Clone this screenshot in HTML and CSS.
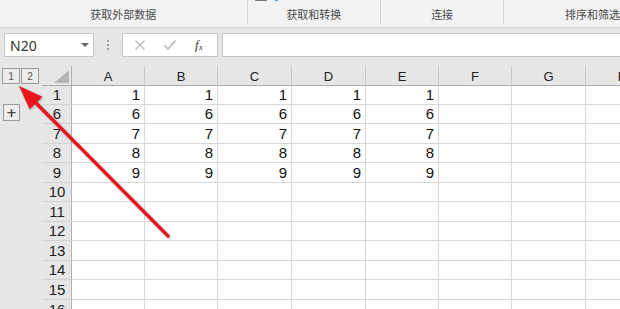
FILE: index.html
```html
<!DOCTYPE html>
<html>
<head>
<meta charset="utf-8">
<link rel="stylesheet" href="styles.css">
</head>
<body>
<div class="app">
  <div class="ribbon">
    <div class="group g1"><span class="glabel">获取外部数据</span></div>
    <div class="group g2"><div class="frag"><i class="fr-dark"></i><i class="fr-blue"></i></div><span class="glabel">获取和转换</span></div>
    <div class="group g3"><span class="glabel">连接</span></div>
    <div class="group g4"><span class="glabel">排序和筛选</span></div>
  </div>
  <div class="fbar">
    <div class="namebox"><span class="nbtext">N20</span><svg class="nbarrow" width="8" height="5" viewBox="0 0 8 5"><polygon points="0,0 8,0 4,4" fill="#666"/></svg></div>
    <div class="vdots"><i></i><i></i><i></i></div>
    <div class="fxbox">
      <svg class="ico" width="12" height="12" viewBox="0 0 12 12"><path d="M1.5 1.5 L10.5 10.5 M10.5 1.5 L1.5 10.5" stroke="#b8b8b8" stroke-width="1.2" fill="none"/></svg>
      <svg class="ico" width="14" height="12" viewBox="0 0 14 12"><path d="M1.5 6.5 L5 10 L12.5 1.5" stroke="#b8b8b8" stroke-width="1.6" fill="none"/></svg>
      <span class="fx">f<sub>x</sub></span>
    </div>
    <div class="finput"></div>
  </div>
  <div class="sheet">
    <div class="gutter">
      <div class="levels"><span class="lvl">1</span><span class="lvl">2</span></div>
      <div class="plus">+</div>
    </div>
    <div class="grid">
      <div class="corner"><svg width="15" height="13" viewBox="0 0 15 13"><polygon points="15,0 15,13 0,13" fill="#b6b6b6"/></svg></div>
      <div class="ch">A</div><div class="ch">B</div><div class="ch">C</div><div class="ch">D</div><div class="ch">E</div><div class="ch">F</div><div class="ch">G</div><div class="ch">H</div>

      <div class="rh">1</div><div class="c">1</div><div class="c">1</div><div class="c">1</div><div class="c">1</div><div class="c">1</div><div class="c"></div><div class="c"></div><div class="c"></div>
      <div class="rh">6</div><div class="c">6</div><div class="c">6</div><div class="c">6</div><div class="c">6</div><div class="c">6</div><div class="c"></div><div class="c"></div><div class="c"></div>
      <div class="rh">7</div><div class="c">7</div><div class="c">7</div><div class="c">7</div><div class="c">7</div><div class="c">7</div><div class="c"></div><div class="c"></div><div class="c"></div>
      <div class="rh">8</div><div class="c">8</div><div class="c">8</div><div class="c">8</div><div class="c">8</div><div class="c">8</div><div class="c"></div><div class="c"></div><div class="c"></div>
      <div class="rh">9</div><div class="c">9</div><div class="c">9</div><div class="c">9</div><div class="c">9</div><div class="c">9</div><div class="c"></div><div class="c"></div><div class="c"></div>
      <div class="rh">10</div><div class="c"></div><div class="c"></div><div class="c"></div><div class="c"></div><div class="c"></div><div class="c"></div><div class="c"></div><div class="c"></div>
      <div class="rh">11</div><div class="c"></div><div class="c"></div><div class="c"></div><div class="c"></div><div class="c"></div><div class="c"></div><div class="c"></div><div class="c"></div>
      <div class="rh">12</div><div class="c"></div><div class="c"></div><div class="c"></div><div class="c"></div><div class="c"></div><div class="c"></div><div class="c"></div><div class="c"></div>
      <div class="rh">13</div><div class="c"></div><div class="c"></div><div class="c"></div><div class="c"></div><div class="c"></div><div class="c"></div><div class="c"></div><div class="c"></div>
      <div class="rh">14</div><div class="c"></div><div class="c"></div><div class="c"></div><div class="c"></div><div class="c"></div><div class="c"></div><div class="c"></div><div class="c"></div>
      <div class="rh">15</div><div class="c"></div><div class="c"></div><div class="c"></div><div class="c"></div><div class="c"></div><div class="c"></div><div class="c"></div><div class="c"></div>
      <div class="rh">16</div><div class="c"></div><div class="c"></div><div class="c"></div><div class="c"></div><div class="c"></div><div class="c"></div><div class="c"></div><div class="c"></div>
    </div>
  </div>
  <svg class="arrow" width="620" height="309" viewBox="0 0 620 309">
    <g class="arrow-g">
      <line x1="168" y1="236" x2="32" y2="99" stroke="#e8161c" stroke-width="3.2" stroke-linecap="round"/>
      <polygon points="19,86 42.4,96.7 29.6,109.3" fill="#e8161c"/>
    </g>
  </svg>
</div>
</body>
</html>
```

FILE: styles.css
```css
* { box-sizing: border-box; }
html, body { margin: 0; padding: 0; }
body {
  width: 620px;
  height: 309px;
  overflow: hidden;
  background: #e6e6e6;
  font-family: "Liberation Sans", Arial, sans-serif;
}
.app { position: relative; width: 620px; height: 309px; overflow: hidden; }

/* Ribbon */
.ribbon {
  height: 28px;
  background: #f3f3f3;
  border-bottom: 1px solid #d6d6d6;
  display: flex;
  align-items: flex-start;
}
.group {
  height: 24px;
  border-right: 1px solid #d8d8d8;
  display: flex;
  flex-direction: column;
  justify-content: flex-end;
  align-items: center;
  padding-bottom: 3px;
  position: relative;
}
.g1 { width: 248px; }
.g2 { width: 134px; }
.g3 { width: 123px; }
.g4 { flex: 1; align-items: flex-start; padding-left: 61px; border-right: none; }
.glabel {
  font-family: "Noto Sans CJK SC", sans-serif;
  font-size: 11px;
  line-height: 14px;
  color: #4a4a4a;
  white-space: nowrap;
}
.frag { position: absolute; top: 0; left: 7px; display: flex; gap: 8px; }
.fr-dark { display: block; width: 12px; height: 1px; background: #777; }
.fr-blue { display: block; width: 3px; height: 1px; background: #5a90d8; }

/* Formula bar */
.fbar {
  height: 38px;
  padding: 5px 0 0 4px;
  display: flex;
  align-items: flex-start;
  background: #e6e6e6;
}
.namebox {
  width: 90px;
  height: 24px;
  background: #fff;
  border: 1px solid #c6c6c6;
  display: flex;
  align-items: center;
  justify-content: space-between;
  padding: 0 4px 0 5px;
}
.nbtext { font-family: "Noto Sans", sans-serif; font-size: 14px; color: #333; }
.nbarrow { margin-top: 1px; }
.vdots {
  width: 28px;
  height: 24px;
  display: flex;
  flex-direction: column;
  align-items: center;
  justify-content: center;
  gap: 2px;
}
.vdots i { display: block; width: 2px; height: 2px; background: #a0a0a0; }
.fxbox {
  width: 96px;
  height: 24px;
  background: #fff;
  border: 1px solid #c6c6c6;
  display: flex;
  align-items: center;
  padding-left: 11px;
  gap: 17px;
}
.fx {
  font-family: "Liberation Serif", serif;
  font-style: italic;
  font-size: 13px;
  color: #333;
  margin-left: 1px;
}
.fx sub { font-size: 9px; vertical-align: -1px; }
.finput {
  flex: 1;
  height: 24px;
  margin-left: 4px;
  background: #fff;
  border: 1px solid #c6c6c6;
  border-right: none;
}

/* Sheet */
.sheet { display: flex; height: 243px; }
.gutter {
  width: 42px;
  flex: none;
  background: #e6e6e6;
  padding: 2px 0 0 2px;
  display: flex;
  flex-direction: column;
  gap: 20px;
}
.levels { display: flex; gap: 1px; }
.lvl {
  width: 18px;
  height: 16px;
  border: 1px solid #9a9a9a;
  background: #ececec;
  font-family: "Liberation Sans", sans-serif;
  font-size: 10px;
  color: #555;
  display: flex;
  align-items: center;
  justify-content: center;
}
.plus {
  width: 17px;
  height: 17px;
  margin-left: 1px;
  border: 1px solid #9a9a9a;
  background: #ececec;
  font-family: "DejaVu Sans", sans-serif;
  font-size: 13px;
  font-weight: bold;
  color: #444;
  display: flex;
  align-items: center;
  justify-content: center;
  line-height: 1;
}
.grid {
  display: grid;
  grid-template-columns: 30px 73px 73px 74px 74px 73px 73px 74px 74px;
  grid-template-rows: 20px 19px 19px 20px 19px 20px 19px 20px 19px 20px 19px 20px 20px;
  flex: none;
  background: #fff;
}
.corner {
  background: #e6e6e6;
  border-right: 1px solid #b0b0b0;
  border-bottom: 1px solid #ababab;
  display: flex;
  align-items: flex-end;
  justify-content: flex-end;
  padding: 0 2px 2px 0;
}
.ch {
  background: #e6e6e6;
  border-right: 1px solid #cacaca;
  border-bottom: 1px solid #ababab;
  font-size: 13px;
  color: #222;
  display: flex;
  align-items: center;
  justify-content: center;
  padding-top: 1px;
}
.rh {
  background: #e6e6e6;
  border-right: 1px solid #b0b0b0;
  border-bottom: 1px solid #d2d2d2;
  font-size: 15px;
  color: #222;
  display: flex;
  align-items: flex-end;
  justify-content: center;
  padding: 0 0 1px 1px;
  line-height: 16px;
}
.c {
  border-right: 1px solid #d8d8d8;
  border-bottom: 1px solid #d8d8d8;
  font-size: 15px;
  line-height: 16px;
  color: #111;
  display: flex;
  align-items: flex-end;
  justify-content: flex-end;
  padding: 0 4px 1px 0;
}

/* Annotation arrow */
.arrow { position: absolute; left: 0; top: 0; pointer-events: none; }
.arrow-g { filter: drop-shadow(1px 1px 1px rgba(0,0,0,0.3)); }
```
